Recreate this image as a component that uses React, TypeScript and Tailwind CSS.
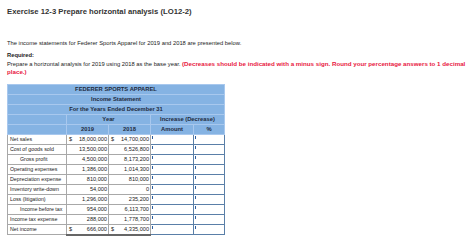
import React from "react";

const rows: { label: string; indent?: boolean; a: string; b: string; dollar?: boolean }[] = [
  { label: "Net sales", a: "18,000,000", b: "14,700,000", dollar: true },
  { label: "Cost of goods sold", a: "13,500,000", b: "6,526,800" },
  { label: "Gross profit", indent: true, a: "4,500,000", b: "8,173,200" },
  { label: "Operating expenses", a: "1,386,000", b: "1,014,300" },
  { label: "Depreciation expense", a: "810,000", b: "810,000" },
  { label: "Inventory write-down", a: "54,000", b: "0" },
  { label: "Loss (litigation)", a: "1,296,000", b: "235,200" },
  { label: "Income before tax", indent: true, a: "954,000", b: "6,113,700" },
  { label: "Income tax expense", a: "288,000", b: "1,778,700" },
  { label: "Net income", a: "666,000", b: "4,335,000", dollar: true },
];

function InputCell({ w }: { w: string }) {
  return (
    <td className={`relative ${w} h-[10px] p-0 border border-[#5a7fa8] bg-white`}>
      <span className="absolute left-[1px] top-[1px] w-[1px] h-[3px] bg-[#2f5f9f]" />
    </td>
  );
}

const hd = "h-[10px] p-0 text-center border border-[#a8c8ee] whitespace-nowrap";

export default function App() {
  return (
    <div
      className="w-[474px] h-[244px] bg-white text-[#222] pl-[7px] pt-[7px] overflow-hidden"
      style={{ fontFamily: '"Liberation Sans", Arial, sans-serif' }}
    >
      <div className="text-[7.7px] leading-[10px] font-bold text-[#333]">
        Exercise 12-3 Prepare horizontal analysis (LO12-2)
      </div>
      <div className="mt-[22px] text-[5.8px] leading-[8px]">
        The income statements for Federer Sports Apparel for 2019 and 2018 are presented below.
      </div>
      <div className="mt-[5px] text-[5.8px] leading-[7.5px]">
        <div className="font-bold">Required:</div>
        <div className="whitespace-nowrap">
          Prepare a horizontal analysis for 2019 using 2018 as the base year.{" "}
          <span className="font-bold text-[#e8173e] text-[6.2px]">
            (Decreases should be indicated with a minus sign. Round your percentage answers to 1 decimal
            <br />
            place.)
          </span>
        </div>
      </div>
      <table className="mt-[7px] border-collapse text-[5.6px] leading-[9px] table-fixed">
        <colgroup>
          <col className="w-[59px]" />
          <col className="w-[42px]" />
          <col className="w-[42px]" />
          <col className="w-[43px]" />
          <col className="w-[31px]" />
        </colgroup>
        <tbody>
          <tr className="bg-[#85b3e3] font-bold text-[#1f2a3c] text-[5.8px]">
            <td colSpan={5} className={hd}>
              FEDERER SPORTS APPAREL
            </td>
          </tr>
          <tr className="bg-[#85b3e3] font-bold text-[#1f2a3c] text-[5.8px]">
            <td colSpan={5} className={hd}>
              Income Statement
            </td>
          </tr>
          <tr className="bg-[#85b3e3] font-bold text-[#1f2a3c] text-[5.8px]">
            <td colSpan={5} className={hd}>
              For the Years Ended December 31
            </td>
          </tr>
          <tr className="bg-[#85b3e3] font-bold text-[#1f2a3c] text-[5.8px]">
            <td className={hd} />
            <td colSpan={2} className={hd}>
              Year
            </td>
            <td colSpan={2} className={hd}>
              Increase (Decrease)
            </td>
          </tr>
          <tr className="bg-[#85b3e3] font-bold text-[#1f2a3c] text-[5.8px]">
            <td className={hd} />
            <td className={hd}>2019</td>
            <td className={hd}>2018</td>
            <td className={hd}>Amount</td>
            <td className={hd}>%</td>
          </tr>
          {rows.map((r, i) => (
            <tr key={r.label}>
              <td
                className={`h-[10px] p-0 border border-[#a8a8a8] whitespace-nowrap overflow-hidden text-[5.3px] ${
                  r.indent ? "pl-[12px]" : "pl-[2px]"
                }`}
              >
                {r.label}
              </td>
              <td
                className={`h-[10px] p-0 pr-[1px] border border-[#a8a8a8] ${
                  i === rows.length - 1 ? "border-b-[#666] border-b-2" : ""
                }`}
              >
                <div className="flex justify-between">
                  <span className="pl-[2px]">{r.dollar ? "$" : ""}</span>
                  <span>{r.a}</span>
                </div>
              </td>
              <td
                className={`h-[10px] p-0 pr-[1px] border border-[#a8a8a8] ${
                  i === rows.length - 1 ? "border-b-[#666] border-b-2" : ""
                }`}
              >
                <div className="flex justify-between">
                  <span className="pl-[2px]">{r.dollar ? "$" : ""}</span>
                  <span>{r.b}</span>
                </div>
              </td>
              <InputCell w="w-[43px]" />
              <InputCell w="w-[31px]" />
            </tr>
          ))}
        </tbody>
      </table>
    </div>
  );
}
